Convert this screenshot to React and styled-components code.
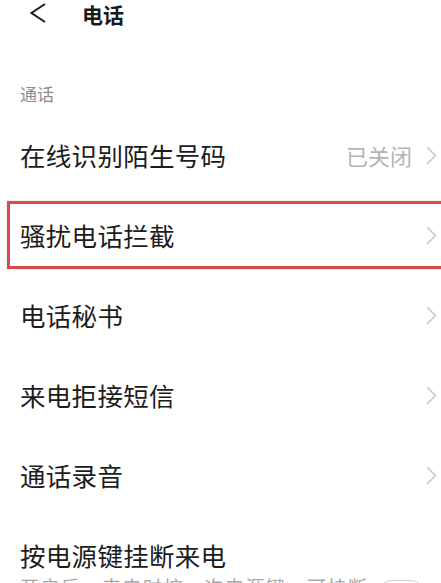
import React from "react";
import styled, { createGlobalStyle } from "styled-components";

const GlobalStyle = createGlobalStyle`
  html, body {
    margin: 0;
    padding: 0;
    background: #ffffff;
    overflow: hidden;
  }
  body {
    font-family: "Noto Sans CJK SC", "Noto Sans", sans-serif;
  }
`;

const rows = [
  { title: "在线识别陌生号码", value: "已关闭" },
  { title: "骚扰电话拦截", highlight: true },
  { title: "电话秘书" },
  { title: "来电拒接短信" },
  { title: "通话录音" },
];

function Chevron() {
  return (
    <ChevronSvg width="11" height="19" viewBox="0 0 11 19">
      <polyline
        points="1.5,1.5 9.5,9.5 1.5,17.5"
        fill="none"
        stroke="#c6c6c6"
        strokeWidth="1.6"
        strokeLinecap="round"
        strokeLinejoin="round"
      />
    </ChevronSvg>
  );
}

export default function App() {
  return (
    <Page>
      <GlobalStyle />
      <Header>
        <BackButton>
          <svg width="16" height="20" viewBox="0 0 16 20">
            <polyline
              points="15,1 1.5,10 15,19"
              fill="none"
              stroke="#1e1e1e"
              strokeWidth="2.1"
              strokeLinejoin="miter"
            />
          </svg>
        </BackButton>
        <Title>电话</Title>
      </Header>

      <SectionLabel>通话</SectionLabel>

      {rows.map((row) => (
        <Row key={row.title} highlight={row.highlight}>
          <RowTitle>{row.title}</RowTitle>
          <RowEnd>
            {row.value && <RowValue>{row.value}</RowValue>}
            <Chevron />
          </RowEnd>
        </Row>
      ))}

      <LastRow>
        <TextCol>
          <RowTitle>按电源键挂断来电</RowTitle>
          <Description>开启后，来电时按一次电源键，可挂断来电</Description>
        </TextCol>
        <Switch />
      </LastRow>
    </Page>
  );
}

const Page = styled.div`
  width: 441px;
  height: 583px;
  overflow: hidden;
  background: #ffffff;
  color: #1c1c1c;
`;

const Header = styled.div`
  display: flex;
  align-items: center;
  height: 28px;
  padding-left: 30px;
`;

const BackButton = styled.div`
  display: flex;
  align-items: center;
  width: 16px;
  height: 20px;
  margin-top: -2px;
  margin-right: 36px;
`;

const Title = styled.div`
  font-size: 21px;
  font-weight: 700;
  line-height: 26px;
  color: #1a1a1a;
`;

const SectionLabel = styled.div`
  padding: 57px 20px 12px;
  font-size: 17px;
  line-height: 18px;
  color: #8c8c8c;
`;

const Row = styled.div`
  position: relative;
  display: flex;
  align-items: center;
  justify-content: space-between;
  height: 80px;
  padding: 0 4px 0 20px;

  ${(p) =>
    p.highlight &&
    `
    &::after {
      content: "";
      position: absolute;
      top: 6px;
      bottom: 6px;
      left: 7px;
      right: -12px;
      border: 3px solid #d84b4b;
      box-shadow: 0 0 1px #e89a9a;
      pointer-events: none;
    }
  `}
`;

const RowTitle = styled.div`
  font-size: 25.5px;
  line-height: 30px;
  color: #1c1c1c;
  letter-spacing: 0.3px;
`;

const RowEnd = styled.div`
  display: flex;
  align-items: center;
  gap: 14px;
`;

const RowValue = styled.div`
  font-size: 22px;
  line-height: 26px;
  color: #b4b4b4;
`;

const ChevronSvg = styled.svg`
  display: block;
`;

const LastRow = styled.div`
  display: flex;
  align-items: flex-start;
  justify-content: space-between;
  padding: 25px 16px 0 20px;
`;

const TextCol = styled.div`
  display: flex;
  flex-direction: column;
  gap: 5px;
  width: 350px;
`;

const Description = styled.div`
  font-size: 19px;
  line-height: 24px;
  color: #a8a8a8;
  letter-spacing: 1.5px;
`;

const Switch = styled.div`
  flex: none;
  width: 45px;
  height: 26px;
  margin-top: 40px;
  border: 1.5px solid #cfcfcf;
  border-radius: 14px;
`;
